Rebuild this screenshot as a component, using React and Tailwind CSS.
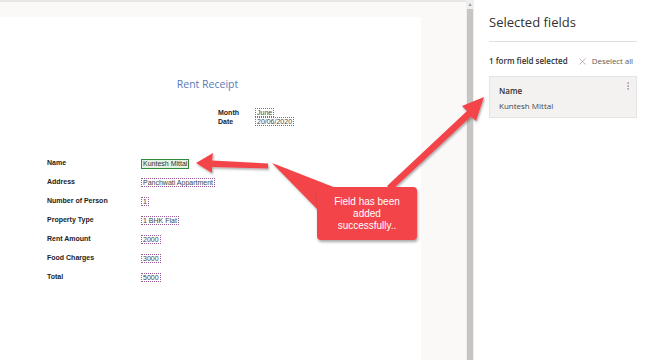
import { X, MoreVertical } from 'lucide-react'

const rows = [
  { label: 'Name', value: 'Kuntesh Mittal', active: true },
  { label: 'Address', value: 'Panchwati Appartment' },
  { label: 'Number of Person', value: '1' },
  { label: 'Property Type', value: '1 BHK Flat' },
  { label: 'Rent Amount', value: '2000' },
  { label: 'Food Charges', value: '3000' },
  { label: 'Total', value: '5000' },
]

function FieldBox({ children, active }) {
  if (active) {
    return <span className="inline-block border border-[#2e8b3a] bg-[#e4f2e4] px-[1px] leading-[8px] text-[#333]">{children}</span>
  }
  return <span className="inline-block border border-dotted border-[#9b5a9b] px-[1px] leading-[7px] text-[#444]">{children}</span>
}

function Arrows() {
  return (
    <svg className="pointer-events-none absolute inset-0" width="650" height="360" viewBox="0 0 650 360">
      <defs>
        <filter id="sh" x="-20%" y="-20%" width="140%" height="140%">
          <feDropShadow dx="1" dy="1.5" stdDeviation="1" floodColor="#000" floodOpacity="0.35" />
        </filter>
      </defs>
      <g fill="#f3444a" filter="url(#sh)">
        {/* left arrow pointing at the Name field */}
        <path d="M268 163.5 L212 160.5 L213 153 L196 163 L212 173 L212 167 L268 168.5 Z" />
        {/* callout tail */}
        <path d="M272 163 L336 188 L318 210 Z" />
        {/* arrow from callout to the panel card */}
        <path d="M392 190 L471 116.5 L476 121 L484 97 L462 106 L467 111 L387 186 Z" />
      </g>
    </svg>
  )
}

export default function App() {
  return (
    <div className="relative flex h-[360px] w-[650px] overflow-hidden bg-white" style={{ fontFamily: '"Open Sans", "Liberation Sans", sans-serif' }}>
      <div className="flex h-full w-[466px] flex-col border-t-2 border-[#e8e6e4] bg-[#faf9f8]">
        <div className="mt-[15px] h-full w-[421px] bg-white" style={{ fontFamily: '"Liberation Sans", Arial, sans-serif' }}>
          <div className="pt-[60px] pr-[6px] text-center text-[10.5px] leading-[14px] text-[#5a78b8]" style={{ fontFamily: '"Open Sans", sans-serif' }}>
            Rent Receipt
          </div>
          <div className="ml-[218px] mt-[17px] grid grid-cols-[37px_auto] text-[7px] leading-[9px]">
            <span className="font-bold text-[#222]">Month</span>
            <span><FieldBox>June</FieldBox></span>
            <span className="font-bold text-[#222]">Date</span>
            <span><FieldBox>20/06/2020</FieldBox></span>
          </div>
          <div className="ml-[47px] mt-[28px] flex flex-col text-[7px]">
            {rows.map(r => (
              <div key={r.label} className="flex h-[19px] items-center">
                <span className="w-[94px] font-bold text-[#222]">{r.label}</span>
                <FieldBox active={r.active}>{r.value}</FieldBox>
              </div>
            ))}
          </div>
        </div>
      </div>
      <div className="flex w-[8px] flex-col bg-[#f0efee]">
        <div className="flex h-[9px] items-center justify-center text-[5px] leading-none text-[#999]">▲</div>
        <div className="mx-auto w-[6px] flex-1 bg-[#c6c5c4]" />
      </div>
      <div className="flex-1 pl-[15px] pr-[13px] pt-[13px]">
        <div className="text-[13px] leading-[18px] text-[#323130]">Selected fields</div>
        <div className="mt-[10px] border-t border-[#e1dfdd]" />
        <div className="mt-[13px] flex items-center justify-between pr-[4px]">
          <span className="text-[8px] font-semibold text-[#323130]">1 form field selected</span>
          <span className="flex items-center gap-[4px] text-[8px] tracking-[-0.1px] text-[#605e5c]">
            <X size={11} strokeWidth={1.2} className="text-[#8b6a8e]" />
            Deselect all
          </span>
        </div>
        <div className="relative mt-[9px] h-[42px] border border-[#e6e4e2] bg-[#f3f2f1] px-[9px] pt-[8px]">
          <div className="text-[8px] font-semibold leading-[12px] text-[#323130]">Name</div>
          <div className="mt-[3px] text-[8px] leading-[12px] text-[#484644]">Kuntesh Mittal</div>
          <MoreVertical size={10} strokeWidth={1.5} className="absolute right-[3px] top-[4px] text-[#9a6a9e]" />
        </div>
      </div>
      <Arrows />
      <div className="absolute left-[317px] top-[187px] flex h-[53px] w-[100px] items-center justify-center rounded-[4px] bg-[#f3444a] text-center text-[10px] leading-[12px] text-white shadow-[1px_2px_3px_rgba(0,0,0,0.35)]" style={{ fontFamily: '"Liberation Sans", Arial, sans-serif' }}>
        Field has been<br />added<br />successfully..
      </div>
    </div>
  )
}
